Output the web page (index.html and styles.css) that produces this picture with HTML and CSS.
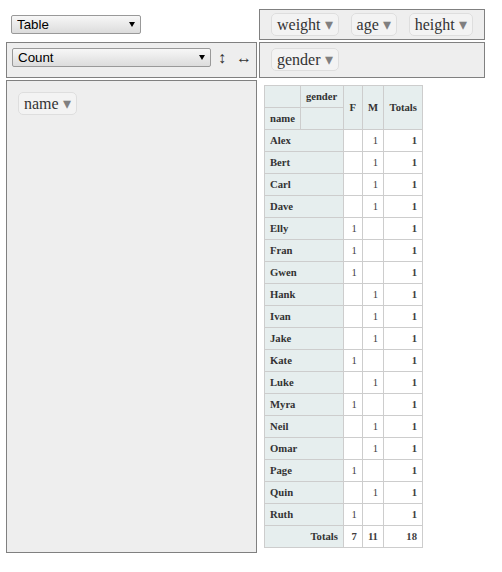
FILE: index.html
```html
<!DOCTYPE html>
<html>
<head>
<meta charset="utf-8">
<link rel="stylesheet" href="styles.css">
</head>
<body>
<table class="pvtUi">
<tbody>
<tr>
<td class="pvtRenderer"><span class="sel sel-renderer"><select><option>Table</option></select></span></td>
<td class="pvtAxisContainer pvtUnused pvtHorizList"><ul class="pvtList"><li><span class="pvtAttr">weight<span class="pvtTriangle"> ▾</span></span></li><li><span class="pvtAttr">age<span class="pvtTriangle"> ▾</span></span></li><li><span class="pvtAttr">height<span class="pvtTriangle"> ▾</span></span></li></ul></td>
</tr>
<tr>
<td class="pvtVals"><div class="valsRow"><span class="sel sel-agg"><select><option>Count</option></select></span><span class="pvtOrder pvtRowOrder">↕</span><span class="pvtOrder">↔</span></div></td>
<td class="pvtAxisContainer pvtCols pvtHorizList"><ul class="pvtList"><li><span class="pvtAttr">gender<span class="pvtTriangle"> ▾</span></span></li></ul></td>
</tr>
<tr>
<td class="pvtAxisContainer pvtRows pvtVertList"><ul class="pvtList"><li><span class="pvtAttr">name<span class="pvtTriangle"> ▾</span></span></li></ul></td>
<td class="pvtRendererArea">
<table class="pvtTable">
<thead>
<tr><th class="colName"></th><th class="pvtAxisLabel colGender">gender</th><th class="pvtColLabel colF" rowspan="2">F</th><th class="pvtColLabel colM" rowspan="2">M</th><th class="pvtTotalLabel colTot" rowspan="2">Totals</th></tr>
<tr><th class="pvtAxisLabel">name</th><th></th></tr>
</thead>
<tbody>
<tr><th class="pvtRowLabel" colspan="2">Alex</th><td></td><td>1</td><td class="pvtTotal">1</td></tr>
<tr><th class="pvtRowLabel" colspan="2">Bert</th><td></td><td>1</td><td class="pvtTotal">1</td></tr>
<tr><th class="pvtRowLabel" colspan="2">Carl</th><td></td><td>1</td><td class="pvtTotal">1</td></tr>
<tr><th class="pvtRowLabel" colspan="2">Dave</th><td></td><td>1</td><td class="pvtTotal">1</td></tr>
<tr><th class="pvtRowLabel" colspan="2">Elly</th><td>1</td><td></td><td class="pvtTotal">1</td></tr>
<tr><th class="pvtRowLabel" colspan="2">Fran</th><td>1</td><td></td><td class="pvtTotal">1</td></tr>
<tr><th class="pvtRowLabel" colspan="2">Gwen</th><td>1</td><td></td><td class="pvtTotal">1</td></tr>
<tr><th class="pvtRowLabel" colspan="2">Hank</th><td></td><td>1</td><td class="pvtTotal">1</td></tr>
<tr><th class="pvtRowLabel" colspan="2">Ivan</th><td></td><td>1</td><td class="pvtTotal">1</td></tr>
<tr><th class="pvtRowLabel" colspan="2">Jake</th><td></td><td>1</td><td class="pvtTotal">1</td></tr>
<tr><th class="pvtRowLabel" colspan="2">Kate</th><td>1</td><td></td><td class="pvtTotal">1</td></tr>
<tr><th class="pvtRowLabel" colspan="2">Luke</th><td></td><td>1</td><td class="pvtTotal">1</td></tr>
<tr><th class="pvtRowLabel" colspan="2">Myra</th><td>1</td><td></td><td class="pvtTotal">1</td></tr>
<tr><th class="pvtRowLabel" colspan="2">Neil</th><td></td><td>1</td><td class="pvtTotal">1</td></tr>
<tr><th class="pvtRowLabel" colspan="2">Omar</th><td></td><td>1</td><td class="pvtTotal">1</td></tr>
<tr><th class="pvtRowLabel" colspan="2">Page</th><td>1</td><td></td><td class="pvtTotal">1</td></tr>
<tr><th class="pvtRowLabel" colspan="2">Quin</th><td></td><td>1</td><td class="pvtTotal">1</td></tr>
<tr><th class="pvtRowLabel" colspan="2">Ruth</th><td>1</td><td></td><td class="pvtTotal">1</td></tr>
<tr><th class="pvtTotalLabel" colspan="2">Totals</th><td class="pvtTotal">7</td><td class="pvtTotal">11</td><td class="pvtTotal">18</td></tr>
</tbody>
</table>
</td>
</tr>
</tbody>
</table>
</body>
</html>
```
FILE: styles.css
```css
body {
  margin: 7px 0 0 4px;
  font-family: "Liberation Serif", "Times New Roman", serif;
  font-size: 16px;
  color: #333;
}

.pvtUi {
  border-spacing: 2px;
  color: #333;
}

.pvtUi > tbody > tr > td {
  padding: 5px;
}

.pvtRenderer {
  vertical-align: middle;
}

.pvtAxisContainer,
.pvtVals {
  border: 1px solid gray;
  background: #eee;
}

.pvtVals {
  vertical-align: middle;
}

.pvtList {
  margin: 0;
  padding: 0;
  list-style: none;
}

.pvtHorizList li {
  display: inline;
  padding: 8px 6px;
}

.pvtCols .pvtList {
  margin-top: -2px;
}

.pvtVertList {
  vertical-align: top;
}

.pvtVertList li {
  padding: 8px 6px;
}

.pvtAttr {
  background: #f3f3f3;
  border: 1px solid #dedede;
  padding: 2px 5px;
  border-radius: 5px;
  white-space: nowrap;
}

.pvtTriangle {
  color: grey;
}

.pvtRendererArea {
  vertical-align: top;
}

/* selects */
.sel {
  position: relative;
  display: inline-block;
  vertical-align: middle;
}

.sel select {
  -webkit-appearance: none;
  appearance: none;
  display: block;
  box-sizing: border-box;
  height: 19px;
  margin: 0;
  padding: 0 0 0 5px;
  border: 1px solid #999;
  border-radius: 2px;
  background: linear-gradient(#f7f7f7, #dcdcdc);
  color: #000;
  font: 13.333px "Liberation Sans", Arial, sans-serif;
}

.sel-renderer select {
  width: 130px;
}

.sel-agg select {
  width: 199px;
}

.sel::after {
  content: "";
  position: absolute;
  right: 6px;
  top: 7px;
  border-left: 3px solid transparent;
  border-right: 3px solid transparent;
  border-top: 5px solid #000;
  pointer-events: none;
}

.valsRow {
  display: flex;
  align-items: center;
  margin-bottom: 5px;
}

.pvtOrder {
  display: inline-block;
  box-sizing: border-box;
  width: 15px;
  margin-left: 5px;
  line-height: 19px;
  color: #333;
}

.pvtRowOrder {
  padding-left: 2px;
}

/* pivot table */
.pvtTable {
  font-size: 8pt;
  text-align: left;
  border-collapse: collapse;
}

.pvtTable th {
  background-color: #e6eeee;
  border: 1px solid #cdcdcd;
  font-size: 8pt;
  padding: 5px;
  line-height: 11px;
  text-align: left;
  vertical-align: middle;
}

.pvtTable .colGender {
  min-width: 32px;
}

.pvtTable .colF {
  min-width: 8px;
}

.pvtTable .colM {
  min-width: 10px;
}

.pvtTable .colTot {
  min-width: 28px;
}

.pvtTable .pvtColLabel {
  text-align: center;
}

.pvtTable .pvtTotalLabel {
  text-align: right;
}

.pvtTable td {
  color: #3d3d3d;
  padding: 5px;
  line-height: 11px;
  background-color: #fff;
  border: 1px solid #cdcdcd;
  vertical-align: top;
  text-align: right;
}

.pvtTable .pvtTotal {
  font-weight: bold;
}
```
